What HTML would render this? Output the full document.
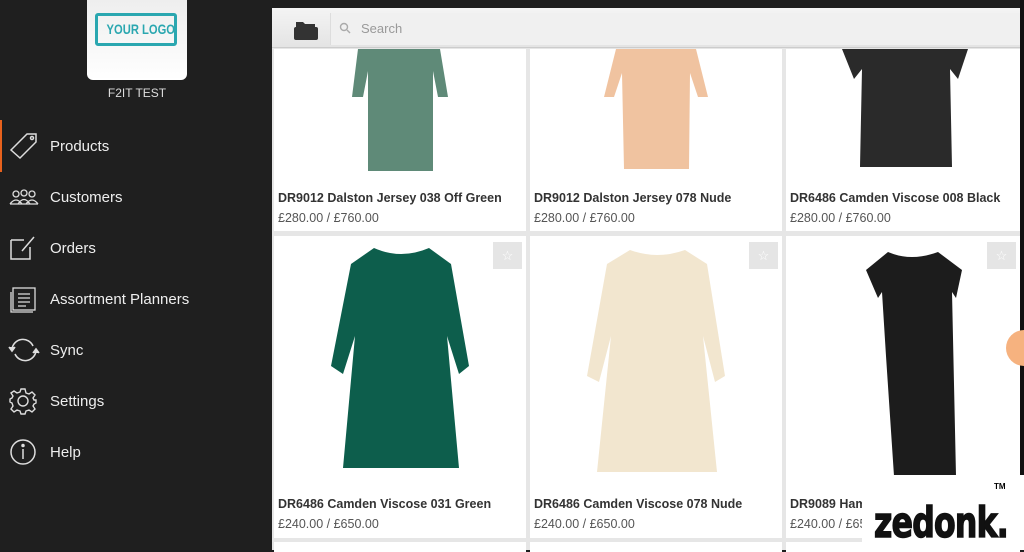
<!DOCTYPE html>
<html><head><meta charset="utf-8"><style>
*{margin:0;padding:0;box-sizing:border-box}
body{width:1024px;height:550px;overflow:hidden;background:#1e1e1e;font-family:"Liberation Sans",sans-serif;position:relative}
.side{position:absolute;left:0;top:0;width:272px;height:550px;background:#1f1f1f}
.logo{position:absolute;left:87px;top:0;width:100px;height:80px;background:linear-gradient(#eee,#fff);border-radius:0 0 6px 6px}
.logo div{position:absolute;left:8px;top:13px;width:82px;height:33px;border:3px solid #2aa7b0;border-radius:3px;color:#2aa7b0;font-weight:bold;font-size:14px;text-align:center;line-height:27px;white-space:nowrap;overflow:hidden}
.logo div span{display:inline-block;transform:scaleX(0.8)}
.f2{position:absolute;left:87px;width:100px;top:86px;text-align:center;color:#ddd;font-size:12px}
.nav{position:absolute;left:0;color:#eee;font-size:15px;height:40px;width:272px}
.nav span{position:absolute;left:50px;top:13px}
.nav svg{position:absolute;left:8px;top:6px}
.act{position:absolute;left:0;top:120px;width:2px;height:52px;background:#e8621d}
.main{position:absolute;left:272px;top:8px;width:749px;height:542px;background:#e6e6e6}
.top{position:absolute;left:272px;top:8px;width:749px;height:40px;background:linear-gradient(#f4f4f4,#e4e4e4);border-bottom:1px solid #ccc}
.search{position:absolute;left:330px;top:13px;width:691px;height:32px;background:#f0f0f0;border-left:1px solid #ddd;color:#999;font-size:13px;padding:8px 30px}
.card{position:absolute;background:#fff}
.t{position:absolute;left:4px;font-size:12.5px;color:#333;font-weight:bold;white-space:nowrap}
.p{position:absolute;left:4px;font-size:12.5px;color:#555;white-space:nowrap}
.star{position:absolute;right:4px;top:6px;width:29px;height:27px;background:#e5e5e5;color:#fff;text-align:center;line-height:27px;font-size:13px}
.zed{position:absolute;left:862px;top:475px;width:162px;height:75px;background:#fff;overflow:hidden}
</style></head><body>
<div class="side">
<div class="logo"><div><span>YOUR LOGO</span></div></div>
<div class="f2">F2IT TEST</div>
<div class="act"></div>
<div class="nav" style="top:125px"><svg width="32" height="30" viewBox="0 0 32 30" fill="none" stroke="#ddd" stroke-width="1.5"><path d="M3 19 L19 3 L28 3 L28 11 L12 27 Z"/><circle cx="24" cy="7" r="1.5"/></svg><span>Products</span></div>
<div class="nav" style="top:176px"><svg width="32" height="30" viewBox="0 0 32 30" fill="none" stroke="#ddd" stroke-width="1.3"><circle cx="8" cy="12" r="3"/><circle cx="16" cy="11" r="3"/><circle cx="24" cy="12" r="3"/><path d="M2 22 Q8 14 14 22 M10 22 Q16 13 22 22 M18 22 Q24 14 30 22 M2 22 H30"/></svg><span>Customers</span></div>
<div class="nav" style="top:227px"><svg width="32" height="30" viewBox="0 0 32 30" fill="none" stroke="#ddd" stroke-width="1.5"><path d="M3 7 H16 M3 7 V26 H22 V14"/><path d="M14 18 L26 4"/></svg><span>Orders</span></div>
<div class="nav" style="top:278px"><svg width="32" height="30" viewBox="0 0 32 30" fill="none" stroke="#ddd" stroke-width="1.3"><rect x="5" y="4" width="22" height="22"/><path d="M3 8 V28 H25 M10 10 H22 M10 14 H22 M10 18 H22 M10 22 H18"/></svg><span>Assortment Planners</span></div>
<div class="nav" style="top:329px"><svg width="32" height="30" viewBox="0 0 32 30" fill="none" stroke="#ddd" stroke-width="1.6"><path d="M4 14 A11 11 0 0 1 25 11"/><path d="M28 16 A11 11 0 0 1 7 19"/><path d="M1 12 L4 16 L7 12 M25 18 L28 14 L31 18" fill="#ddd"/></svg><span>Sync</span></div>
<div class="nav" style="top:380px"><svg width="32" height="30" viewBox="0 0 32 30" fill="none" stroke="#ddd" stroke-width="1.4"><circle cx="15" cy="15" r="5"/><path d="M13 3 H17 L18 7 L21 8 L24 6 L27 9 L25 12 L26 14 L28 14 V17 L26 18 L25 20 L27 23 L24 26 L21 24 L18 25 L17 28 H13 L12 25 L9 24 L6 26 L3 23 L5 20 L4 17 L2 16 V13 L4 12 L5 10 L3 7 L6 5 L9 7 L12 6 Z"/></svg><span>Settings</span></div>
<div class="nav" style="top:431px"><svg width="32" height="30" viewBox="0 0 32 30" fill="none" stroke="#ddd" stroke-width="1.5"><circle cx="15" cy="15" r="12"/><path d="M15 12 V22"/><circle cx="15" cy="8.5" r="1" fill="#ddd"/></svg><span>Help</span></div>
</div>
<div class="main"></div>
<div class="top"></div>
<svg style="position:absolute;left:293px;top:19px" width="26" height="22" viewBox="0 0 26 22"><path d="M3 3 H10 L12 5 H22 V8 H3Z" fill="#333"/><rect x="1" y="8" width="24" height="13" rx="2" fill="#333"/></svg>
<div class="search"><svg style="position:absolute;left:8px;top:9px" width="12" height="12" viewBox="0 0 12 12" fill="none" stroke="#aaa" stroke-width="1.4"><circle cx="5" cy="5" r="3.5"/><path d="M8 8 L11 11"/></svg>Search</div>

<div class="card" style="left:274px;top:49px;width:252px;height:182px"><svg style="position:absolute;left:74px;top:0" width="104" height="124"><path d="M10 0 H92 L100 48 H90 L85 22 L85 122 H20 L20 22 L15 48 H4 Z" fill="#5f8a78"/></svg><div class="t" style="top:142px">DR9012 Dalston Jersey 038 Off Green</div><div class="p" style="top:162px">£280.00 / £760.00</div></div>
<div class="card" style="left:530px;top:49px;width:252px;height:182px"><svg style="position:absolute;left:74px;top:0" width="104" height="124"><path d="M12 0 H92 L104 48 H94 L86 24 L85 120 H20 L18 24 L10 48 H0 Z" fill="#f0c3a0"/></svg><div class="t" style="top:142px">DR9012 Dalston Jersey 078 Nude</div><div class="p" style="top:162px">£280.00 / £760.00</div></div>
<div class="card" style="left:786px;top:49px;width:236px;height:182px"><svg style="position:absolute;left:54px;top:0" width="130" height="124"><path d="M2 0 H128 L118 30 L110 20 L112 118 H20 L22 20 L14 30 Z" fill="#2a2a2a"/></svg><div class="t" style="top:142px">DR6486 Camden Viscose 008 Black</div><div class="p" style="top:162px">£280.00 / £760.00</div></div>
<div class="card" style="left:274px;top:236px;width:252px;height:302px"><div class="star">☆</div><svg style="position:absolute;left:55px;top:10px" width="145" height="230"><path d="M45 2 Q72 14 100 2 L122 18 L140 120 L130 128 L118 90 L130 222 H14 L26 90 L14 128 L2 120 L22 18 Z" fill="#0d5e4c"/></svg><div class="t" style="top:261px">DR6486 Camden Viscose 031 Green</div><div class="p" style="top:281px">£240.00 / £650.00</div></div>
<div class="card" style="left:530px;top:236px;width:252px;height:302px"><div class="star">☆</div><svg style="position:absolute;left:55px;top:10px" width="145" height="230"><path d="M45 4 Q72 14 100 4 L122 18 L140 130 L130 136 L118 90 L132 226 H12 L26 90 L14 136 L2 130 L22 18 Z" fill="#f2e6cf"/></svg><div class="t" style="top:261px">DR6486 Camden Viscose 078 Nude</div><div class="p" style="top:281px">£240.00 / £650.00</div></div>
<div class="card" style="left:786px;top:236px;width:234px;height:302px"><div class="star">☆</div><svg style="position:absolute;left:70px;top:10px" width="112" height="230"><path d="M32 6 Q55 16 82 6 L106 24 L100 52 L96 46 L100 230 H38 L30 110 L26 46 L22 52 L10 24 Z" fill="#1c1c1c"/></svg><div class="t" style="top:261px">DR9089 Hampton</div><div class="p" style="top:281px">£240.00 / £650.00</div></div>
<div class="card" style="left:274px;top:542px;width:252px;height:10px"></div>
<div class="card" style="left:530px;top:542px;width:252px;height:10px"></div>
<div class="card" style="left:786px;top:542px;width:234px;height:10px"></div>
<div style="position:absolute;left:1020px;top:0;width:4px;height:550px;background:#111"></div>
<div style="position:absolute;left:1006px;top:330px;width:20px;height:36px;border-radius:18px 0 0 18px;background:#f6b27f"></div>
<div class="zed"><div style="position:absolute;left:12px;top:26px;font-family:'DejaVu Sans',sans-serif;font-weight:bold;font-size:42px;letter-spacing:-1px;color:#111;line-height:44px;transform:scaleX(0.75);transform-origin:left;-webkit-text-stroke:1.5px #111">zedonk.</div><div style="position:absolute;left:132px;top:7px;font-size:8px;font-weight:bold">TM</div></div>
</body></html>
